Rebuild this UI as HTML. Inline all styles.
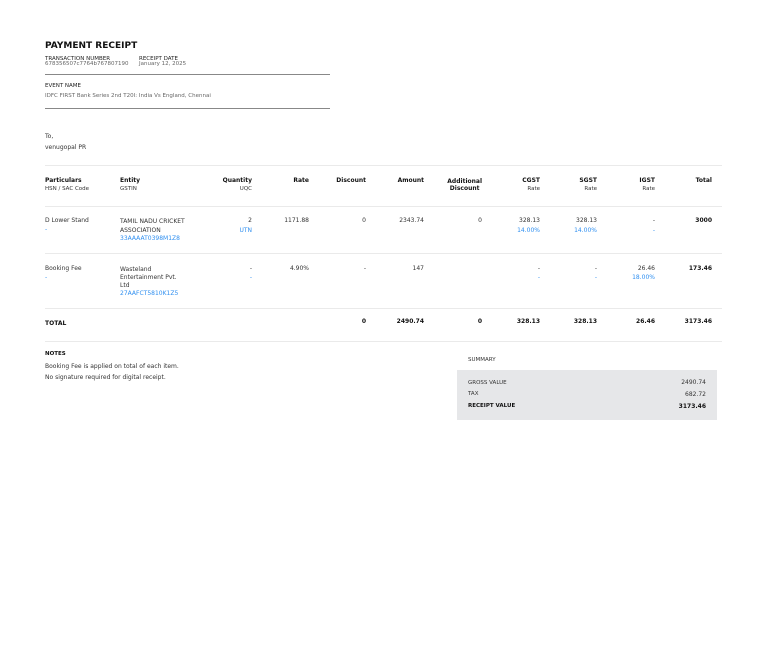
<!DOCTYPE html>
<html><head><meta charset="utf-8"><style>
body{margin:0;width:768px;height:668px;background:#fff;font-family:"DejaVu Sans","Liberation Sans",sans-serif;color:#333;position:relative;overflow:hidden}
div{position:absolute;white-space:nowrap;line-height:1}
.s{font-size:5.5px}
.t{font-size:6px}
.b{font-weight:bold;color:#111}
.bl{color:#2f8ff0}
.g{color:#666}
.hr{height:1px;background:#888}
.lh{height:1px;background:#eaeaea}
</style></head><body>
<div class="b" style="left:45px;top:42px;font-size:9px">PAYMENT RECEIPT</div>
<div class="s" style="left:45px;top:57px;color:#222">TRANSACTION NUMBER</div>
<div class="s g" style="left:45px;top:62px">678356507c7764b767807190</div>
<div class="s" style="left:139px;top:57px;color:#222">RECEIPT DATE</div>
<div class="s g" style="left:139px;top:62px">January 12, 2025</div>
<div class="hr" style="left:45px;top:74px;width:285px"></div>
<div class="s" style="left:45px;top:84px;color:#222">EVENT NAME</div>
<div class="s g" style="left:45px;top:94px">IDFC FIRST Bank Series 2nd T20I: India Vs England, Chennai</div>
<div class="hr" style="left:45px;top:108px;width:285px"></div>
<div class="t" style="left:45px;top:134px">To,</div>
<div class="t" style="left:45px;top:145px">venugopal PR</div>

<div class="lh" style="left:45px;top:165px;width:677px"></div>
<div class="t b" style="left:45px;top:178px">Particulars</div>
<div class="s" style="left:45px;top:187px">HSN / SAC Code</div>
<div class="t b" style="left:120px;top:178px">Entity</div>
<div class="s" style="left:120px;top:187px">GSTIN</div>
<div class="t b" style="right:516px;top:178px">Quantity</div>
<div class="s" style="right:516px;top:187px">UQC</div>
<div class="t b" style="right:459px;top:178px">Rate</div>
<div class="t b" style="right:402px;top:178px">Discount</div>
<div class="t b" style="right:344px;top:178px">Amount</div>
<div class="t b" style="right:286px;top:178px;text-align:center;line-height:7px">Additional<br>Discount</div>
<div class="t b" style="right:228px;top:178px">CGST</div>
<div class="s" style="right:228px;top:187px">Rate</div>
<div class="t b" style="right:171px;top:178px">SGST</div>
<div class="s" style="right:171px;top:187px">Rate</div>
<div class="t b" style="right:113px;top:178px">IGST</div>
<div class="s" style="right:113px;top:187px">Rate</div>
<div class="t b" style="right:56px;top:178px">Total</div>
<div class="lh" style="left:45px;top:206px;width:677px"></div>

<div class="t" style="left:45px;top:218px">D Lower Stand</div>
<div class="t bl" style="left:45px;top:227px">-</div>
<div class="t" style="left:120px;top:218px;line-height:8.5px">TAMIL NADU CRICKET<br>ASSOCIATION</div>
<div class="t bl" style="left:120px;top:236px">33AAAAT0398M1Z8</div>
<div class="t" style="right:516px;top:218px">2</div>
<div class="t bl" style="right:516px;top:228px">UTN</div>
<div class="t" style="right:459px;top:218px">1171.88</div>
<div class="t" style="right:402px;top:218px">0</div>
<div class="t" style="right:344px;top:218px">2343.74</div>
<div class="t" style="right:286px;top:218px">0</div>
<div class="t" style="right:228px;top:218px">328.13</div>
<div class="t bl" style="right:228px;top:228px">14.00%</div>
<div class="t" style="right:171px;top:218px">328.13</div>
<div class="t bl" style="right:171px;top:228px">14.00%</div>
<div class="t" style="right:113px;top:218px">-</div>
<div class="t bl" style="right:113px;top:228px">-</div>
<div class="t b" style="right:56px;top:218px">3000</div>
<div class="lh" style="left:45px;top:253px;width:677px"></div>

<div class="t" style="left:45px;top:266px">Booking Fee</div>
<div class="t bl" style="left:45px;top:275px">-</div>
<div class="t" style="left:120px;top:266px;line-height:8px">Wasteland<br>Entertainment Pvt.<br>Ltd</div>
<div class="t bl" style="left:120px;top:291px">27AAFCT5810K1Z5</div>
<div class="t" style="right:516px;top:266px">-</div>
<div class="t bl" style="right:516px;top:275px">-</div>
<div class="t" style="right:459px;top:266px">4.90%</div>
<div class="t" style="right:402px;top:266px">-</div>
<div class="t" style="right:344px;top:266px">147</div>
<div class="t" style="right:228px;top:266px">-</div>
<div class="t bl" style="right:228px;top:275px">-</div>
<div class="t" style="right:171px;top:266px">-</div>
<div class="t bl" style="right:171px;top:275px">-</div>
<div class="t" style="right:113px;top:266px">26.46</div>
<div class="t bl" style="right:113px;top:275px">18.00%</div>
<div class="t b" style="right:56px;top:266px">173.46</div>
<div class="lh" style="left:45px;top:308px;width:677px"></div>

<div class="t b" style="left:45px;top:321px">TOTAL</div>
<div class="t b" style="right:402px;top:319px">0</div>
<div class="t b" style="right:344px;top:319px">2490.74</div>
<div class="t b" style="right:286px;top:319px">0</div>
<div class="t b" style="right:228px;top:319px">328.13</div>
<div class="t b" style="right:171px;top:319px">328.13</div>
<div class="t b" style="right:113px;top:319px">26.46</div>
<div class="t b" style="right:56px;top:319px">3173.46</div>
<div class="lh" style="left:45px;top:341px;width:677px"></div>

<div class="s b" style="left:45px;top:352px">NOTES</div>
<div class="t" style="left:45px;top:364px">Booking Fee is applied on total of each item.</div>
<div class="t" style="left:45px;top:375px">No signature required for digital receipt.</div>

<div class="s" style="left:468px;top:358px">SUMMARY</div>
<div style="left:457px;top:370px;width:260px;height:50px;background:#e6e7e9"></div>
<div class="s" style="left:468px;top:381px">GROSS VALUE</div>
<div class="t" style="right:62px;top:380px">2490.74</div>
<div class="s" style="left:468px;top:392px">TAX</div>
<div class="t" style="right:62px;top:392px">682.72</div>
<div class="s b" style="left:468px;top:404px">RECEIPT VALUE</div>
<div class="t b" style="right:62px;top:404px">3173.46</div>
</body></html>
